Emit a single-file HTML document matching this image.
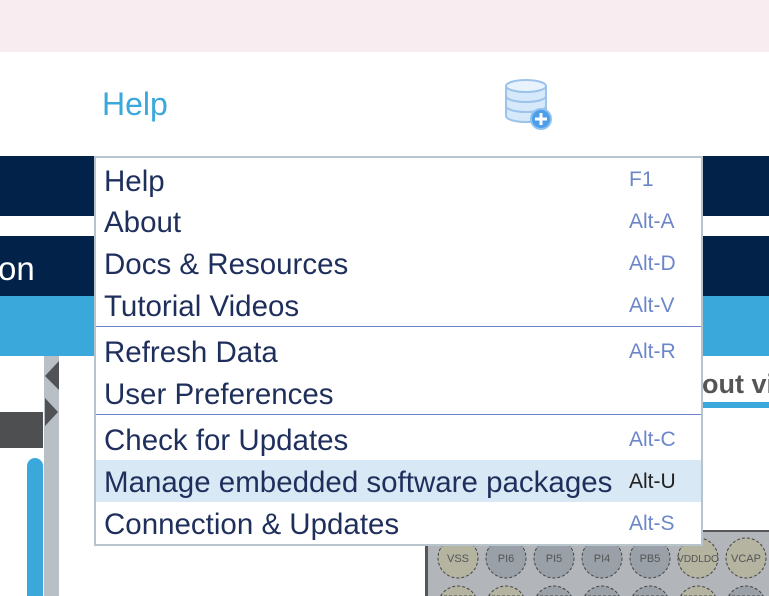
<!DOCTYPE html>
<html style="overflow:hidden;width:769px;height:596px"><head><meta charset="utf-8"><style>
*{margin:0;padding:0;box-sizing:border-box}
body{width:769px;height:596px;position:relative;overflow:hidden;background:#fff;font-family:"Liberation Sans",Arial,sans-serif}
.a{position:absolute}
.item{position:absolute;left:8px;font-size:29.5px;color:#1f2f5c;line-height:42px;height:42px;white-space:nowrap}
.sc{position:absolute;left:533px;font-size:21px;color:#6b87c9}
</style></head><body>
<div class="a" style="left:0;top:0;width:769px;height:52px;background:#f9ecf0"></div>
<div class="a" style="left:102px;top:84px;font-size:32px;color:#3aa8db;line-height:40px">Help</div>
<svg class="a" style="left:503px;top:78px" width="52" height="52" viewBox="0 0 52 52">
<path d="M3 8 v30 a20 6 0 0 0 40 0 v-30" fill="#d6e9fb" stroke="#9cc3ea" stroke-width="2"/>
<ellipse cx="23" cy="8" rx="20" ry="6" fill="#e8f3fd" stroke="#9cc3ea" stroke-width="2"/>
<path d="M3 18 a20 6 0 0 0 40 0 M3 28 a20 6 0 0 0 40 0" fill="none" stroke="#9cc3ea" stroke-width="2"/>
<circle cx="38" cy="41" r="10" fill="#4b9eea" stroke="#8fc1f0" stroke-width="2"/>
<path d="M38 35 v12 M32 41 h12" stroke="#fff" stroke-width="3"/>
</svg>
<div class="a" style="left:0;top:156px;width:769px;height:60px;background:#032249"></div>
<div class="a" style="left:0;top:236px;width:769px;height:60px;background:#032249"></div>
<div class="a" style="left:-2px;top:250px;font-size:33px;color:#fff">on</div>
<div class="a" style="left:690px;top:250px;font-size:33px;color:#fff">r</div>
<div class="a" style="left:0;top:296px;width:769px;height:60px;background:#3aa8db"></div>
<div class="a" style="left:44px;top:356px;width:15px;height:240px;background:#b8c0c6"></div>
<svg class="a" style="left:44px;top:356px" width="15" height="70"><path d="M15 5 L1 20 L15 34Z M1 42 L14 56 L1 70Z" fill="#505256"/></svg>
<div class="a" style="left:0;top:412px;width:43px;height:36px;background:#4d4f50"></div>
<div class="a" style="left:27px;top:458px;width:16px;height:138px;background:#3aa8db;border-radius:8px 8px 0 0"></div>
<div class="a" style="left:702px;top:369px;width:67px;height:32px;overflow:hidden;font-size:27px;font-weight:bold;color:#555;white-space:nowrap">out vi</div>
<div class="a" style="left:702px;top:402px;width:67px;height:6px;background:#3aa8db"></div>
<svg class="a" style="left:425px;top:530px" width="344" height="66" viewBox="0 0 344 66" font-family="Liberation Sans, Arial, sans-serif" font-size="11" fill="#555">
<rect width="344" height="66" fill="#b2b6ba"/>
<rect width="3" height="66" fill="#555"/><rect width="344" height="2" fill="#555"/>
<g stroke="#444" stroke-dasharray="3 2">
<circle cx="33" cy="28" r="20" fill="#b4b4a0"/><circle cx="81" cy="28" r="20" fill="#9aa0a8"/><circle cx="129" cy="28" r="20" fill="#9aa0a8"/><circle cx="177" cy="28" r="20" fill="#9aa0a8"/><circle cx="225" cy="28" r="20" fill="#9aa0a8"/><circle cx="273" cy="28" r="20" fill="#b4b4a0"/><circle cx="321" cy="28" r="20" fill="#b4b4a0"/>
<path d="M15.7 66 A20 20 0 0 1 50.3 66Z" fill="#b4b4a0"/>
<path d="M63.7 66 A20 20 0 0 1 98.3 66Z" fill="#b4b4a0"/>
<path d="M111.7 66 A20 20 0 0 1 146.3 66Z" fill="#9aa0a8"/>
<path d="M159.7 66 A20 20 0 0 1 194.3 66Z" fill="#9aa0a8"/>
<path d="M207.7 66 A20 20 0 0 1 242.3 66Z" fill="#9aa0a8"/>
<path d="M255.7 66 A20 20 0 0 1 290.3 66Z" fill="#b4b4a0"/>
<path d="M303.7 66 A20 20 0 0 1 338.3 66Z" fill="#9aa0a8"/>
</g>
<g text-anchor="middle">
<text x="33" y="32">VSS</text><text x="81" y="32">PI6</text><text x="129" y="32">PI5</text><text x="177" y="32">PI4</text><text x="225" y="32">PB5</text><text x="273" y="32" font-size="10">VDDLDO</text><text x="321" y="32">VCAP</text>
</g>
</svg>
<div class="a" style="left:94px;top:156px;width:609px;height:390px;background:#fff;border:2px solid #b8c4cc">
 <div class="a" style="left:0;top:302px;width:605px;height:42px;background:#d9e8f5"></div>
 <div class="item" style="top:3px">Help</div><div class="sc" style="top:10px">F1</div>
 <div class="item" style="top:44px">About</div><div class="sc" style="top:52px">Alt-A</div>
 <div class="item" style="top:86px">Docs &amp; Resources</div><div class="sc" style="top:94px">Alt-D</div>
 <div class="item" style="top:128px">Tutorial Videos</div><div class="sc" style="top:136px">Alt-V</div>
 <div class="a" style="left:0;top:168px;width:605px;height:1px;background:#6b87c9"></div>
 <div class="item" style="top:174px">Refresh Data</div><div class="sc" style="top:182px">Alt-R</div>
 <div class="item" style="top:216px">User Preferences</div>
 <div class="a" style="left:0;top:256px;width:605px;height:1px;background:#6b87c9"></div>
 <div class="item" style="top:262px">Check for Updates</div><div class="sc" style="top:270px">Alt-C</div>
 <div class="item" style="top:304px">Manage embedded software packages</div><div class="sc" style="top:312px;color:#222">Alt-U</div>
 <div class="item" style="top:346px">Connection &amp; Updates</div><div class="sc" style="top:354px">Alt-S</div>
</div>
</body></html>
